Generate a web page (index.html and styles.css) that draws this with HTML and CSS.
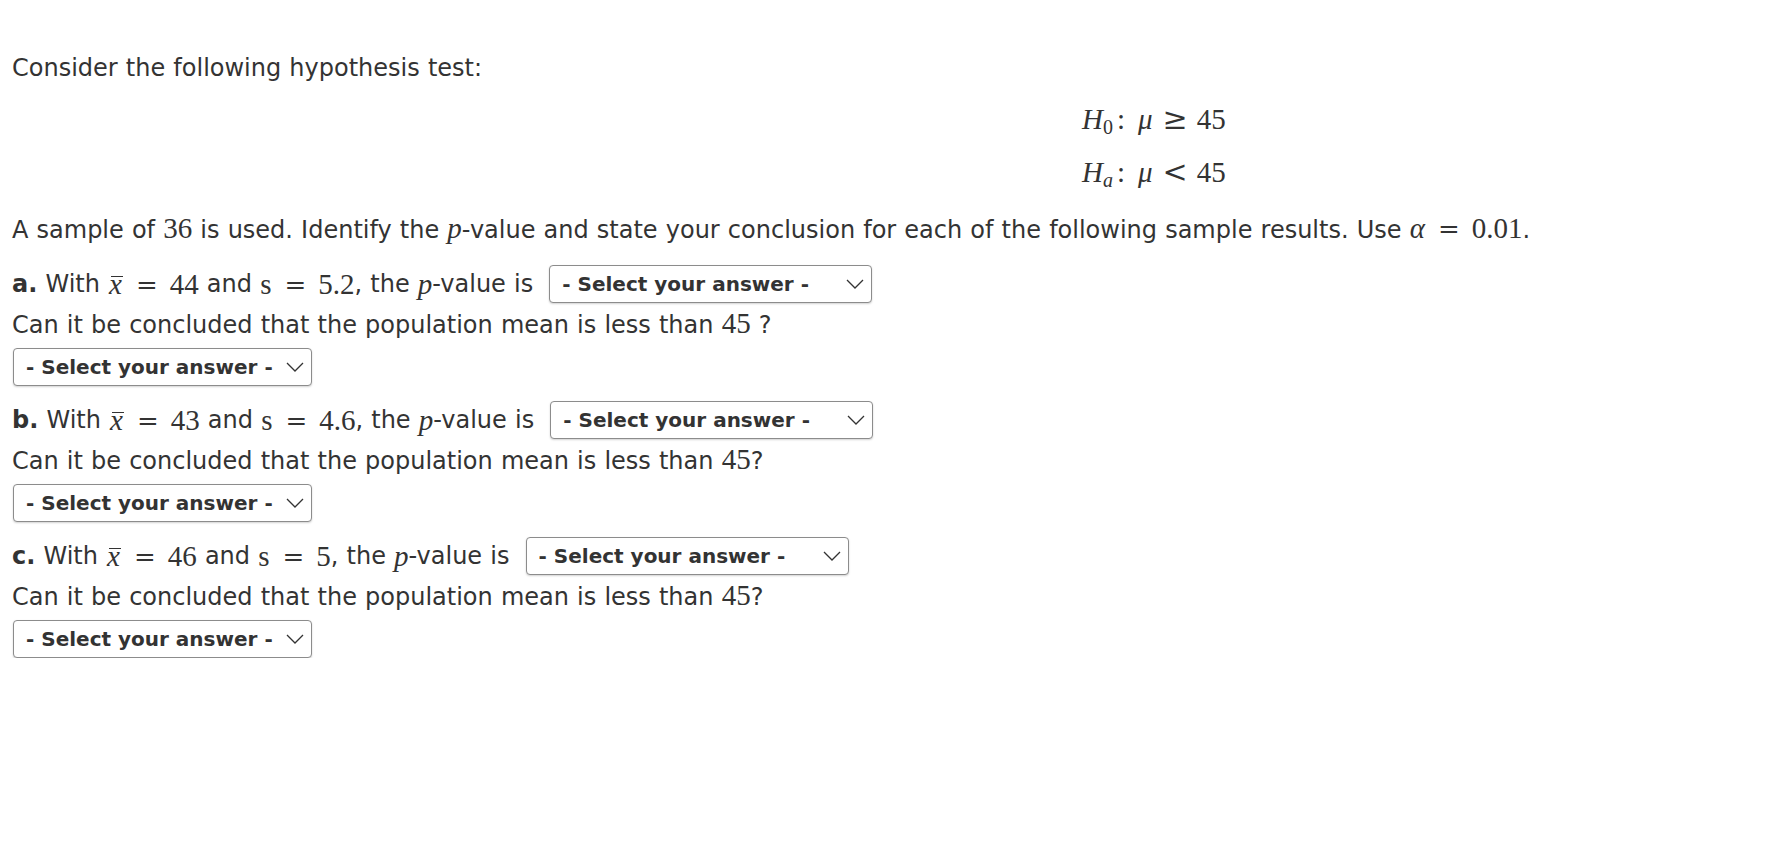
FILE: index.html
```html
<!DOCTYPE html>
<html>
<head>
<meta charset="utf-8">
<link rel="stylesheet" href="styles.css">
</head>
<body>
<div class="page">
  <p class="intro">Consider the following hypothesis test:</p>
  <div class="hyp">
    <div class="hrow"><span class="m"><i>H</i><sub class="sub">0</sub><span class="colon">:</span><i class="mu">μ</i><span class="rel big">≥</span>45</span></div>
    <div class="hrow"><span class="m"><i>H</i><sub class="sub"><i>a</i></sub><span class="colon">:</span><i class="mu">μ</i><span class="rel big">&lt;</span>45</span></div>
  </div>
  <p class="lead">A sample of <span class="m">36</span> is used. Identify the <span class="m"><i>p</i></span>-value and state your conclusion for each of the following sample results. Use <span class="m"><i>α</i><span class="rel">=</span>0.01</span>.</p>

  <div class="part">
    <div class="row"><b>a.</b>&nbsp;With <span class="m"><span class="xbar"><i>x</i></span><span class="rel">=</span>44</span> and <span class="m">s<span class="rel">=</span>5.2</span>, the <span class="m"><i>p</i></span>-value is <span class="sel wide"><select><option>- Select your answer -</option></select><svg class="chev" viewBox="0 0 18 10" width="18" height="10"><path d="M1 1 L9 9 L17 1" fill="none" stroke="#333" stroke-width="1.3"/></svg></span></div>
    <p class="ask">Can it be concluded that the population mean is less than <span class="m">45</span> ?</p>
    <span class="sel narrow"><select><option>- Select your answer -</option></select><svg class="chev" viewBox="0 0 18 10" width="18" height="10"><path d="M1 1 L9 9 L17 1" fill="none" stroke="#333" stroke-width="1.3"/></svg></span>
  </div>

  <div class="part">
    <div class="row"><b>b.</b>&nbsp;With <span class="m"><span class="xbar"><i>x</i></span><span class="rel">=</span>43</span> and <span class="m">s<span class="rel">=</span>4.6</span>, the <span class="m"><i>p</i></span>-value is <span class="sel wide"><select><option>- Select your answer -</option></select><svg class="chev" viewBox="0 0 18 10" width="18" height="10"><path d="M1 1 L9 9 L17 1" fill="none" stroke="#333" stroke-width="1.3"/></svg></span></div>
    <p class="ask">Can it be concluded that the population mean is less than <span class="m">45</span>?</p>
    <span class="sel narrow"><select><option>- Select your answer -</option></select><svg class="chev" viewBox="0 0 18 10" width="18" height="10"><path d="M1 1 L9 9 L17 1" fill="none" stroke="#333" stroke-width="1.3"/></svg></span>
  </div>

  <div class="part">
    <div class="row"><b>c.</b>&nbsp;With <span class="m"><span class="xbar"><i>x</i></span><span class="rel">=</span>46</span> and <span class="m">s<span class="rel">=</span>5</span>, the <span class="m"><i>p</i></span>-value is <span class="sel wide"><select><option>- Select your answer -</option></select><svg class="chev" viewBox="0 0 18 10" width="18" height="10"><path d="M1 1 L9 9 L17 1" fill="none" stroke="#333" stroke-width="1.3"/></svg></span></div>
    <p class="ask">Can it be concluded that the population mean is less than <span class="m">45</span>?</p>
    <span class="sel narrow"><select><option>- Select your answer -</option></select><svg class="chev" viewBox="0 0 18 10" width="18" height="10"><path d="M1 1 L9 9 L17 1" fill="none" stroke="#333" stroke-width="1.3"/></svg></span>
  </div>
</div>
</body>
</html>
```

FILE: styles.css
```css
html, body {
  margin: 0;
  padding: 0;
  background: #fff;
}
.page {
  padding: 53px 0 0 12px;
  font-family: "DejaVu Sans", Verdana, sans-serif;
  font-size: 24px;
  color: #333;
  word-spacing: 0.5px;
}
p {
  margin: 0;
}
.intro {
  line-height: 30px;
}
.hyp {
  margin-top: 12px;
  padding-left: 1070px;
}
.hrow {
  height: 53px;
  line-height: 53px;
}
.m {
  font-family: "Liberation Serif", "Times New Roman", serif;
  font-size: 29px;
  line-height: 1;
  white-space: nowrap;
  word-spacing: 0;
}
.m i {
  font-style: italic;
}
.sub {
  font-size: 20px;
  vertical-align: -5px;
  line-height: 0;
}
.colon {
  margin: 0 13px 0 4px;
}
.rel {
  font-family: "DejaVu Serif", serif;
  font-size: 26px;
  margin: 0 12px 0 13px;
}
.rel.big {
  font-size: 30px;
  margin: 0 9px 0 10px;
}
.xbar {
  position: relative;
  padding: 0 1px;
}
.xbar::before {
  content: "";
  position: absolute;
  left: 3px;
  right: 0;
  top: 8px;
  border-top: 1.5px solid #333;
}
.lead {
  margin-top: 13px;
  line-height: 30px;
}
.part {
  margin-top: 20px;
}
.part + .part {
  margin-top: 15px;
}
.row {
  height: 38px;
  line-height: 38px;
  display: flex;
  align-items: center;
  white-space: pre;
}
.row b {
  font-weight: bold;
}
.ask {
  height: 45px;
  line-height: 45px;
}
.sel {
  position: relative;
  display: inline-block;
  height: 38px;
  vertical-align: middle;
}
.sel select {
  display: block;
  appearance: none;
  -webkit-appearance: none;
  height: 38px;
  box-sizing: border-box;
  border: 1px solid #8c8c8c;
  border-radius: 4px;
  box-shadow: 0 1px 2px rgba(0,0,0,0.18);
  background: #fff;
  font-family: "DejaVu Sans", Verdana, sans-serif;
  font-size: 20px;
  font-weight: bold;
  color: #333;
  padding: 0 0 0 12px;
  margin: 0;
}
.sel.wide select {
  width: 323px;
}
.sel.narrow {
  display: block;
  width: fit-content;
  margin-left: 1px;
}
.sel.narrow select {
  width: 299px;
}
.sel .chev {
  position: absolute;
  right: 8px;
  top: 14px;
  pointer-events: none;
}
.row .sel {
  margin-left: 8px;
}
```
